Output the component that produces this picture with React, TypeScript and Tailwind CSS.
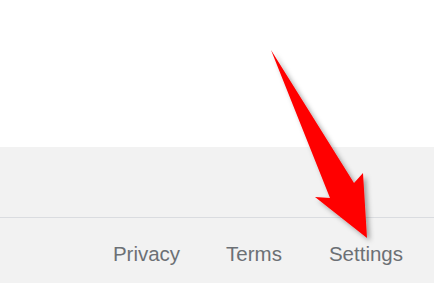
import React from "react";

export default function App() {
  return (
    <div className="relative w-[434px] h-[283px] overflow-hidden bg-white" style={{ fontFamily: '"Liberation Sans", Arial, sans-serif' }}>
      <div className="h-[147px] bg-white" />
      <div className="bg-[#f2f2f2]">
        <div className="h-[71px] border-b border-[#dadce0]" />
        <div className="h-[65px] flex justify-end pr-[31px] pt-[24px] text-[20.5px] leading-[23px] text-[#6c7075]">
          <a>Privacy</a>
          <a className="ml-[46px]">Terms</a>
          <a className="ml-[47px]">Settings</a>
        </div>
      </div>
      <svg className="absolute left-0 top-0" width="434" height="283" viewBox="0 0 434 283">
        <defs>
          <filter id="sh" x="-20%" y="-20%" width="140%" height="140%">
            <feDropShadow dx="3" dy="3" stdDeviation="2.5" floodColor="#000" floodOpacity="0.35" />
          </filter>
        </defs>
        <polygon
          points="271,50 354,183 363,173 367,238 315,197 330,198"
          fill="#ff0000"
          filter="url(#sh)"
        />
      </svg>
    </div>
  );
}
